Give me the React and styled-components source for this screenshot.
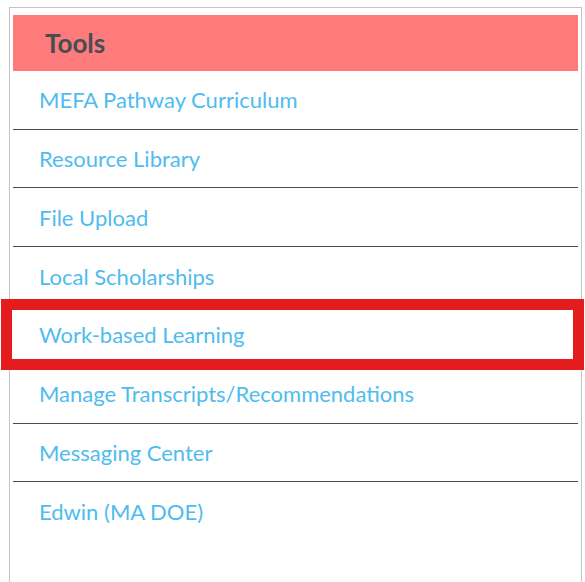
import React from "react";
import styled, { createGlobalStyle } from "styled-components";

const Global = createGlobalStyle`
  html, body { margin: 0; padding: 0; background: #fff; overflow: hidden; }
  body { font-family: Lato, "Open Sans", Arial, sans-serif; }
`;

const Page = styled.div`
  position: relative;
  width: 585px;
  height: 582px;
  padding: 7px 3px 0 9px;
  box-sizing: border-box;
  overflow: hidden;
`;

const Panel = styled.div`
  border: 1px solid #c4c4c4;
  border-bottom: none;
  padding: 7px 3px 0 3px;
  height: 620px;
  box-sizing: border-box;
`;

const Header = styled.div`
  background: #ff7b7b;
  height: 55.8px;
  display: flex;
  align-items: center;
  padding-left: 32px;
  font-family: Lato, sans-serif;
  font-weight: 700;
  font-size: 26px;
  color: #454d55;
`;

const List = styled.ul`
  list-style: none;
  margin: 0;
  padding: 0;
`;

const Item = styled.li`
  height: 57.8px;
  display: flex;
  align-items: center;
  padding-left: 26px;
  border-bottom: ${(p) => (p.$last ? "none" : "1px solid #474c52")};
  font-family: Lato, sans-serif;
  font-size: 22px;
  color: #4fbcee;
`;

const Highlight = styled.div`
  position: absolute;
  left: 1px;
  top: 299px;
  width: 583px;
  height: 71px;
  border: 11px solid #e41c1e;
  box-sizing: border-box;
  pointer-events: none;
`;

const items = [
  "MEFA Pathway Curriculum",
  "Resource Library",
  "File Upload",
  "Local Scholarships",
  "Work-based Learning",
  "Manage Transcripts/Recommendations",
  "Messaging Center",
  "Edwin (MA DOE)",
];

export default function App() {
  return (
    <Page>
      <Global />
      <Panel>
        <Header>Tools</Header>
        <List>
          {items.map((t, i) => (
            <Item key={t} $last={i === items.length - 1}>
              {t}
            </Item>
          ))}
        </List>
      </Panel>
      <Highlight />
    </Page>
  );
}
